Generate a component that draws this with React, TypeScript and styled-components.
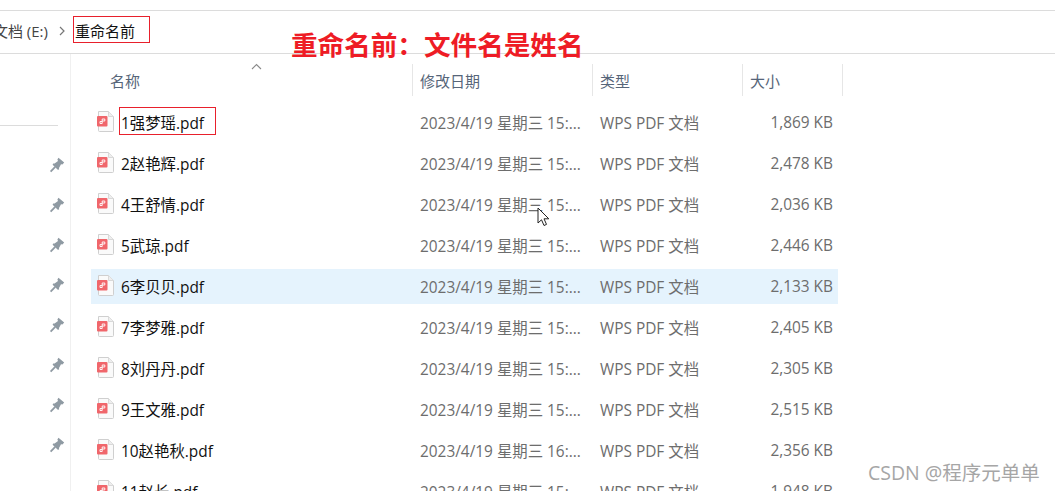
import React from 'react'
import styled, { createGlobalStyle } from 'styled-components'

const GlobalStyle = createGlobalStyle`
    html, body {
        margin:0;
        padding:0;
        background:#fff;
    }
    body {
        font-family:"Open Sans", "Noto Sans CJK SC", sans-serif;
    }
`

const Page = styled.div`
    position:relative;
    width:1055px;
    height:491px;
    overflow:hidden;
    padding-top:10px;
    box-sizing:border-box;
`

const Breadcrumb = styled.div`
    height:44px;
    box-sizing:border-box;
    border-top:1px solid #dcdcdc;
    border-bottom:1px solid #dcdcdc;
    padding-bottom:3px;
    display:flex;
    align-items:center;
    font-size:15px;
    color:#333;
`

const DriveName = styled.div`
    width:48px;
    white-space:nowrap;
    overflow:hidden;
    direction:rtl;
    color:#444;
`

const Chevron = styled.svg`
    width:8px;
    height:10px;
    margin-left:10px;
    margin-right:9px;
`

const CurrentFolder = styled.div`
    position:relative;
    color:#111;
`

const RedBox = styled.div`
    position:absolute;
    border:1px solid #e8202c;
    box-sizing:border-box;
    pointer-events:none;
`

const FolderBox = styled(RedBox)`
    left:-2px;
    top:-4px;
    width:77px;
    height:27px;
`

const Annotation = styled.div`
    position:absolute;
    left:291px;
    top:24px;
    font-family:"Noto Sans CJK SC", sans-serif;
    font-size:26.6px;
    font-weight:700;
    color:#ee1c25;
    white-space:nowrap;
`

const Body = styled.div`
    display:flex;
    height:437px;
`

const Sidebar = styled.div`
    width:71px;
    flex-shrink:0;
    box-sizing:border-box;
    border-right:1px solid #f0f0f0;
    padding-top:71px;
`

const SidebarDivider = styled.div`
    width:58px;
    height:1px;
    background:#dcdcdc;
    margin-bottom:31px;
`

const PinList = styled.div`
    display:flex;
    flex-direction:column;
    align-items:flex-end;
    gap:24px;
    padding-right:5px;
`

const PinIcon = styled.svg`
    width:16px;
    height:16px;
    display:block;
`

const Content = styled.div`
    flex:1;
    padding-left:20px;
    padding-top:10px;
`

const HeaderRow = styled.div`
    position:relative;
    display:grid;
    grid-template-columns:322px 180px 150px 100px;
    width:752px;
    height:33px;
    margin-bottom:8px;
    font-size:15px;
    color:#566579;
`

const HeaderCell = styled.div<{ $first?: boolean }>`
    display:flex;
    align-items:center;
    box-sizing:border-box;
    padding-left:${p => (p.$first ? '19px' : '7px')};
    border-right:1px solid #e6e6e6;
    height:32px;
`

const SortArrow = styled.svg`
    position:absolute;
    left:160px;
    top:-1px;
    width:11px;
    height:7px;
`

const Row = styled.div<{ $selected?: boolean }>`
    display:grid;
    grid-template-columns:322px 180px 150px 95px;
    width:747px;
    height:35px;
    margin-bottom:6px;
    align-items:center;
    font-size:15.4px;
    color:#6d6d6d;
    background:${p => (p.$selected ? '#e5f3fd' : 'transparent')};
`

const NameCell = styled.div`
    display:flex;
    align-items:center;
    padding-left:6px;
    color:#111;
`

const FileIcon = styled.svg`
    width:18px;
    height:21px;
    margin-right:6px;
    margin-top:-3px;
    flex-shrink:0;
`

const FileName = styled.div`
    position:relative;
    white-space:nowrap;
`

const FileBox = styled(RedBox)`
    left:-2px;
    top:-4px;
    width:97px;
    height:28px;
`

const DateCell = styled.div`
    padding-left:7px;
    white-space:nowrap;
`

const TypeCell = styled.div`
    padding-left:7px;
    white-space:nowrap;
`

const SizeCell = styled.div`
    text-align:right;
    padding-right:5px;
    white-space:nowrap;
`

const Cursor = styled.svg`
    position:absolute;
    left:537px;
    top:207px;
    width:13px;
    height:20px;
`

const Watermark = styled.div`
    position:absolute;
    left:868px;
    top:457px;
    font-size:19.5px;
    color:#a6a6a6;
    white-space:nowrap;
`

interface IFile {
    name: string
    date: string
    size: string
}

const files: IFile[] = [
    { name: '1强梦瑶.pdf', date: '2023/4/19 星期三 15:...', size: '1,869 KB' },
    { name: '2赵艳辉.pdf', date: '2023/4/19 星期三 15:...', size: '2,478 KB' },
    { name: '4王舒情.pdf', date: '2023/4/19 星期三 15:...', size: '2,036 KB' },
    { name: '5武琼.pdf', date: '2023/4/19 星期三 15:...', size: '2,446 KB' },
    { name: '6李贝贝.pdf', date: '2023/4/19 星期三 15:...', size: '2,133 KB' },
    { name: '7李梦雅.pdf', date: '2023/4/19 星期三 15:...', size: '2,405 KB' },
    { name: '8刘丹丹.pdf', date: '2023/4/19 星期三 15:...', size: '2,305 KB' },
    { name: '9王文雅.pdf', date: '2023/4/19 星期三 15:...', size: '2,515 KB' },
    { name: '10赵艳秋.pdf', date: '2023/4/19 星期三 16:...', size: '2,356 KB' },
    { name: '11赵长.pdf', date: '2023/4/19 星期三 15:...', size: '1,948 KB' }
]

const Pin = () => (
    <PinIcon viewBox="0 0 16 16">
        <path d="M9.5 0.8 L15.2 5.6 L13.4 7.4 L12 7.2 L10 11 L10.2 12.4 L8.8 12.8 L3.6 7.8 L4.2 6.4 L5.6 6.6 L9 4 L8.4 2.4 Z" fill="#8f9aa3" />
        <path d="M6.2 9.8 L1.6 14.6" stroke="#8f9aa3" strokeWidth="1.8" fill="none" />
    </PinIcon>
)

const PdfIcon = () => (
    <FileIcon viewBox="0 0 18 21">
        <path d="M1.5 0.5 H11.5 L16.5 5.5 V19.5 Q16.5 20.5 15.5 20.5 H2.5 Q1.5 20.5 1.5 19.5 Z" fill="#fafafa" stroke="#cfcfcf" />
        <path d="M11.5 0.5 V5.5 H16.5" fill="#eee" stroke="#d9d9d9" />
        <rect x="0" y="5" width="10.5" height="10.5" rx="1" fill="#f0666b" />
        <path d="M3 12.5 H5.2 V8 H7.8 V10 H5.2 M3 12.5 V10.5 H5.2" fill="none" stroke="#fff" strokeWidth="0.9" />
    </FileIcon>
)

const App: React.FC = () => {
    return <Page>
        <GlobalStyle />
        <Breadcrumb>
            <DriveName>文档 (E:)</DriveName>
            <Chevron viewBox="0 0 8 10">
                <path d="M2 1 L6 5 L2 9" fill="none" stroke="#777" strokeWidth="1.2" />
            </Chevron>
            <CurrentFolder>
                重命名前
                <FolderBox />
            </CurrentFolder>
        </Breadcrumb>
        <Annotation>重命名前：文件名是姓名</Annotation>
        <Body>
            <Sidebar>
                <SidebarDivider />
                <PinList>
                    {Array.from({ length: 8 }).map((_, i) => {
                        return <Pin key={i} />
                    })}
                </PinList>
            </Sidebar>
            <Content>
                <HeaderRow>
                    <HeaderCell $first>名称</HeaderCell>
                    <HeaderCell>修改日期</HeaderCell>
                    <HeaderCell>类型</HeaderCell>
                    <HeaderCell>大小</HeaderCell>
                    <SortArrow viewBox="0 0 11 7">
                        <path d="M1 6 L5.5 1.5 L10 6" fill="none" stroke="#8a8a8a" strokeWidth="1.1" />
                    </SortArrow>
                </HeaderRow>
                {files.map((file, i) => {
                    return <Row key={file.name} $selected={i === 4}>
                        <NameCell>
                            <PdfIcon />
                            <FileName>
                                {file.name}
                                {i === 0 && <FileBox />}
                            </FileName>
                        </NameCell>
                        <DateCell>{file.date}</DateCell>
                        <TypeCell>WPS PDF 文档</TypeCell>
                        <SizeCell>{file.size}</SizeCell>
                    </Row>
                })}
            </Content>
        </Body>
        <Cursor viewBox="0 0 13 20">
            <path d="M1 1 V16 L4.5 12.8 L7 18.5 L9.5 17.4 L7 11.8 L11.8 11.8 Z" fill="#fff" stroke="#222" strokeWidth="1" />
        </Cursor>
        <Watermark>CSDN @程序元单单</Watermark>
    </Page>
}

export default App
